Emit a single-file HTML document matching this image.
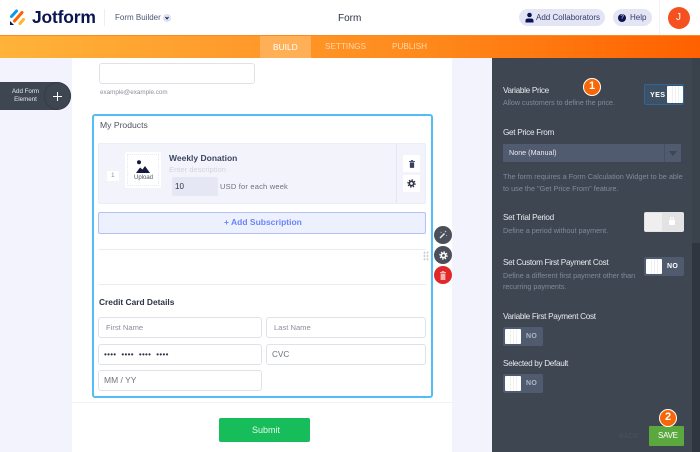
<!DOCTYPE html>
<html><head><meta charset="utf-8">
<style>
*{box-sizing:border-box}
html,body{margin:0;padding:0}
body{width:700px;height:452px;position:relative;overflow:hidden;background:#f3f3fe;font-family:"Liberation Sans",sans-serif;color:#2c3345;filter:blur(.25px)}
.a{position:absolute}
.t{position:absolute;white-space:nowrap;line-height:1}
.inp{position:absolute;background:#fff;border:1px solid #e0e2ea;border-radius:3px;height:21px;font-size:7.6px;line-height:19px;color:#8d8f9c}
.lab{color:#e8eaee;font-size:8.2px;letter-spacing:-.32px}
.sub{color:#7f8b9c;font-size:7.2px}
.tg{position:absolute;width:40px;height:19px;border-radius:2px;background:#505b70}
.tg i{position:absolute;left:2px;top:2px;width:16px;height:15px;background:#fff;border-radius:1px;background-image:linear-gradient(90deg,transparent 5px,#f0f0f0 5px,#f0f0f0 6px,transparent 6px,transparent 8px,#f0f0f0 8px,#f0f0f0 9px,transparent 9px,transparent 11px,#f0f0f0 11px,#f0f0f0 12px,transparent 12px)}
.tg b{position:absolute;left:23px;top:6px;font-size:7px;line-height:1;color:#aeb6c3;letter-spacing:.3px}
.c{position:absolute;border-radius:50%}
.n{position:absolute;width:18px;height:18px;border-radius:50%;background:#f76707;border:1.5px solid #fff;color:#fff;font-size:11px;font-weight:bold;line-height:15px;text-align:center}
</style></head><body>

<div class="a" style="left:0;top:0;width:700px;height:35px;background:#fff"></div>
<svg class="a" style="left:9px;top:9px" width="16" height="17" viewBox="0 0 16 17">
<path d="M2.5 7.5L7.5 2" stroke="#0a99f2" stroke-width="3" stroke-linecap="round"/>
<path d="M5.5 12L13 3.5" stroke="#ff6100" stroke-width="3" stroke-linecap="round"/>
<path d="M11 14.5L14.5 10.5" stroke="#ffb629" stroke-width="3" stroke-linecap="round"/>
<path d="M1 12L1 16L5 16Z" fill="#0a1551"/>
</svg>
<div class="t" style="left:32px;top:9px;font-size:17.5px;font-weight:bold;color:#0a1551;letter-spacing:-.2px">Jotform</div>
<div class="a" style="left:104px;top:9px;width:1px;height:17px;background:#eceef3"></div>
<div class="t" style="left:115px;top:14px;font-size:8px;color:#4d5673">Form Builder</div>
<div class="c" style="left:163px;top:14px;width:8px;height:8px;background:#dfe1f3"></div>
<svg class="a" style="left:165px;top:16px" width="4" height="4" viewBox="0 0 4 4"><path d="M.5 1L2 2.8L3.5 1" fill="none" stroke="#0a1551" stroke-width="1"/></svg>
<div class="t" style="left:338px;top:14px;font-size:10px;color:#2c3345">Form</div>

<div class="a" style="left:519px;top:9px;width:86px;height:17px;border-radius:9px;background:#e3e5f5"></div>
<svg class="a" style="left:524px;top:12px" width="11" height="11" viewBox="0 0 11 11"><circle cx="5.5" cy="3" r="2.3" fill="#0a1551"/><path d="M1.5 10.5V8.5Q1.5 6.5 4 6.5H7Q9.5 6.5 9.5 8.5V10.5Z" fill="#0a1551"/></svg>
<div class="t" style="left:536px;top:14px;font-size:8px;color:#343c6a">Add Collaborators</div>
<div class="a" style="left:613px;top:9px;width:39px;height:17px;border-radius:9px;background:#e3e5f5"></div>
<div class="c" style="left:618px;top:13.5px;width:8px;height:8px;background:#0a1551"></div>
<div class="t" style="left:620.5px;top:15px;font-size:6px;color:#fff">?</div>
<div class="t" style="left:630px;top:14px;font-size:8px;color:#343c6a">Help</div>
<div class="a" style="left:659px;top:0;width:1px;height:35px;background:#f3f3f6"></div>
<div class="c" style="left:668px;top:7px;width:22px;height:22px;background:#f4511e"></div>
<div class="t" style="left:676px;top:13px;font-size:10px;color:#fff">J</div>

<div class="a" style="left:0;top:35px;width:700px;height:23px;background:linear-gradient(90deg,#ffb338 0%,#ff9a2b 35%,#ff8a1c 60%,#ff6100 100%);border-top:1px solid #ff8a1c"></div>
<div class="a" style="left:260px;top:36px;width:51px;height:22px;background:#ffb057"></div>
<div class="t" style="left:273px;top:43px;font-size:8.4px;color:#fff">BUILD</div>
<div class="t" style="left:325px;top:43px;font-size:8.2px;color:#ffd9ae">SETTINGS</div>
<div class="t" style="left:392px;top:43px;font-size:8.2px;color:#ffd9ae">PUBLISH</div>

<div class="a" style="left:72px;top:58px;width:380px;height:394px;background:#fff"></div>

<div class="a" style="left:0;top:82px;width:71px;height:28px;border-radius:0 14px 14px 0;background:#3e4651"></div>
<div class="c" style="left:44px;top:82px;width:27px;height:28px;border:1px solid #353c46"></div>
<div class="t" style="left:7px;top:88px;width:37px;text-align:center;font-size:6.2px;line-height:8px;color:#e6e8ee;white-space:normal">Add Form Element</div>
<div class="a" style="left:53px;top:95.5px;width:9px;height:1px;background:#fff"></div>
<div class="a" style="left:57px;top:92px;width:1px;height:9px;background:#fff"></div>

<div class="inp" style="left:99px;top:63px;width:156px;height:21px"></div>
<div class="t" style="left:100px;top:90px;font-size:6.3px;color:#8d8f9c">example@example.com</div>

<div class="a" style="left:92px;top:114px;width:341px;height:284px;border:2px solid #55bdf6;border-radius:3px;background:#fff"></div>
<div class="t" style="left:100px;top:121px;font-size:8.6px;color:#4f5263">My Products</div>

<div class="a" style="left:98px;top:143px;width:328px;height:61px;background:#f3f4fb;border:1px solid #eceef7;border-radius:2px"></div>
<div class="a" style="left:396px;top:144px;width:1px;height:59px;background:#e3e5f0"></div>
<div class="a" style="left:107px;top:171px;width:12px;height:10px;background:#fff;border-radius:1px"></div>
<div class="t" style="left:111px;top:173px;font-size:6.5px;color:#8a93ad">1</div>
<div class="a" style="left:125px;top:152px;width:36px;height:36px;background:#fff;border-radius:2px"></div>
<div class="a" style="left:127px;top:154px;width:32px;height:32px;border:1px dotted #e8e9ee"></div>
<svg class="a" style="left:135px;top:159px" width="16" height="14" viewBox="0 0 16 14"><circle cx="4" cy="3.2" r="2" fill="#141a3c"/><path d="M1 14L5 8.5L7.5 10.5L10 7L15 14Z" fill="#141a3c"/></svg>
<div class="t" style="left:134px;top:175px;font-size:6px;color:#4f5263">Upload</div>
<div class="t" style="left:169px;top:154px;font-size:8.5px;font-weight:bold;color:#3e4560">Weekly Donation</div>
<div class="t" style="left:169px;top:166px;font-size:7.6px;color:#d2d4de">Enter description</div>
<div class="a" style="left:172px;top:177px;width:46px;height:19px;background:#e5e7f4;border-radius:2px"></div>
<div class="t" style="left:175px;top:183px;font-size:8px;color:#2c3345">10</div>
<div class="t" style="left:220px;top:183px;font-size:7.5px;color:#6c7080;letter-spacing:.2px">USD for each week</div>
<div class="a" style="left:403px;top:155px;width:17px;height:17px;background:#fff;border-radius:1px"></div>
<svg class="a" style="left:408.5px;top:159.5px" width="6" height="8" viewBox="0 0 7 9"><path d="M2.2 0H4.8V1H7V2H0V1H2.2ZM1 2.6H6V8.5Q6 9 5.5 9H1.5Q1 9 1 8.5Z" fill="#3a4060"/></svg>
<div class="a" style="left:403px;top:175px;width:17px;height:17px;background:#fff;border-radius:1px"></div>
<svg class="a" style="left:407px;top:179px" width="9" height="9" viewBox="0 0 9 9"><circle cx="4.5" cy="4.5" r="2.2" fill="none" stroke="#2c3345" stroke-width="1.7"/><circle cx="4.5" cy="4.5" r="3.6" fill="none" stroke="#2c3345" stroke-width="1.2" stroke-dasharray="1.4 1.43"/></svg>

<div class="a" style="left:98px;top:212px;width:328px;height:22px;background:#edf0fd;border:1.5px solid #b4c1f6;border-radius:2px"></div>
<div class="t" style="left:224px;top:218px;font-size:8.5px;font-weight:bold;color:#6c85f5">+ Add Subscription</div>

<div class="a" style="left:98px;top:249px;width:328px;height:1px;background:#ebecf1"></div>
<div class="a" style="left:98px;top:284px;width:328px;height:1px;background:#ebecf1"></div>
<div class="a" style="left:423px;top:251px;width:6px;height:10px;background-image:radial-gradient(#d0d1dc .9px,transparent 1px);background-size:3px 3.3px"></div>

<div class="c" style="left:434px;top:226px;width:18px;height:18px;background:#4a4f5a"></div>
<svg class="a" style="left:438px;top:230px" width="10" height="10" viewBox="0 0 10 10"><path d="M2 8L6.5 3.5" stroke="#e6e8ee" stroke-width="1.5"/><path d="M7.5 .8V2.4M6.7 1.6H8.3M3 1.8V2.8M2.5 2.3H3.5M8.6 5V6M8.1 5.5H9.1" stroke="#cfd2d8" stroke-width=".6"/></svg>
<div class="c" style="left:434px;top:246px;width:18px;height:18px;background:#4a4f5a"></div>
<svg class="a" style="left:438.5px;top:250.5px" width="9" height="9" viewBox="0 0 9 9"><circle cx="4.5" cy="4.5" r="2.2" fill="none" stroke="#fff" stroke-width="1.7"/><circle cx="4.5" cy="4.5" r="3.6" fill="none" stroke="#fff" stroke-width="1.2" stroke-dasharray="1.4 1.43"/></svg>
<div class="c" style="left:434px;top:266px;width:18px;height:18px;background:#e0282a"></div>
<svg class="a" style="left:440px;top:270.5px" width="6" height="9" viewBox="0 0 6 9"><path d="M1.8 0H4.2V1H6V2H0V1H1.8ZM.6 2.5H5.4V9H.6Z" fill="#f6b0b0"/></svg>

<div class="t" style="left:99px;top:298px;font-size:8.4px;font-weight:bold;color:#2c3345">Credit Card Details</div>
<div class="inp" style="left:98px;top:317px;width:164px;padding-left:7px">First Name</div>
<div class="inp" style="left:266px;top:317px;width:160px;padding-left:7px">Last Name</div>
<div class="inp" style="left:98px;top:344px;width:164px;padding-left:5px;color:#2c3345;font-size:8px;letter-spacing:.3px;word-spacing:2.5px">&#8226;&#8226;&#8226;&#8226; &#8226;&#8226;&#8226;&#8226; &#8226;&#8226;&#8226;&#8226; &#8226;&#8226;&#8226;&#8226;</div>
<div class="inp" style="left:266px;top:344px;width:160px;padding-left:5px;font-size:8.2px;color:#6f7280">CVC</div>
<div class="inp" style="left:98px;top:370px;width:164px;padding-left:5px;font-size:8.5px;color:#6f7280">MM / YY</div>

<div class="a" style="left:72px;top:402px;width:380px;height:1px;background:#f1f2f6"></div>
<div class="a" style="left:219px;top:418px;width:91px;height:24px;background:#18bd5b;border-radius:2px"></div>
<div class="t" style="left:252px;top:426px;font-size:9px;color:#e6f8ee">Submit</div>

<div class="a" style="left:492px;top:58px;width:208px;height:394px;background:#3e4651"></div>
<div class="a" style="left:692px;top:58px;width:8px;height:394px;background:#3a424c"></div>
<div class="a" style="left:692px;top:243px;width:8px;height:209px;background:#30363f"></div>

<div class="n" style="left:583px;top:78px">1</div>
<div class="t lab" style="left:503px;top:87px">Variable Price</div>
<div class="t sub" style="left:503px;top:100px;font-size:7.1px">Allow customers to define the price.</div>
<div class="tg" style="left:644px;top:84px;height:21px;background:#3d5064;border:1px solid #2a679c"><i style="left:22px;top:1px;width:16px;height:17px"></i><b style="left:5px;top:6px;color:#fff;font-weight:bold;font-size:7.2px">YES</b></div>

<div class="t lab" style="left:503px;top:129px">Get Price From</div>
<div class="a" style="left:503px;top:144px;width:178px;height:18px;background:#505b70;border-radius:1px"></div>
<div class="a" style="left:664px;top:144px;width:1px;height:18px;background:#465063"></div>
<div class="a" style="left:669px;top:151px;border-left:4px solid transparent;border-right:4px solid transparent;border-top:5px solid #3e4651"></div>
<div class="t" style="left:509px;top:149px;font-size:7.2px;color:#e8eaee">None (Manual)</div>
<div class="t sub" style="left:503px;top:171px;line-height:12px;white-space:normal;width:181px;font-size:7.3px">The form requires a Form Calculation Widget to be able to use the "Get Price From" feature.</div>

<div class="t lab" style="left:503px;top:214px">Set Trial Period</div>
<div class="t sub" style="left:503px;top:227px">Define a period without payment.</div>
<div class="a" style="left:644px;top:212px;width:40px;height:20px;background:#e3e3e3;border-radius:2px"></div>
<div class="a" style="left:645px;top:213px;width:17px;height:18px;background:#efefef"></div>
<div class="a" style="left:669px;top:220px;width:6px;height:5px;background:#fff;border-radius:1px"></div>
<div class="a" style="left:670px;top:217px;width:4px;height:4px;border:1px solid #fff;border-radius:2px 2px 0 0"></div>

<div class="t lab" style="left:503px;top:259px">Set Custom First Payment Cost</div>
<div class="t sub" style="left:503px;top:272px">Define a different first payment other than</div>
<div class="t sub" style="left:503px;top:283px">recurring payments.</div>
<div class="tg" style="left:644px;top:257px"><i></i><b style="color:#fff;font-weight:bold">NO</b></div>

<div class="t lab" style="left:503px;top:313px">Variable First Payment Cost</div>
<div class="tg" style="left:503px;top:327px"><i></i><b style="font-weight:bold">NO</b></div>
<div class="t lab" style="left:503px;top:360px">Selected by Default</div>
<div class="tg" style="left:503px;top:374px"><i></i><b style="font-weight:bold">NO</b></div>

<div class="t" style="left:619px;top:432px;font-size:7.2px;color:#4a525e">BACK</div>
<div class="a" style="left:649px;top:426px;width:35px;height:20px;background:#5aa83e;border-radius:1px"></div>
<div class="t" style="left:658px;top:432px;font-size:8px;letter-spacing:-.25px;color:#fff">SAVE</div>
<div class="n" style="left:659px;top:409px">2</div>
</body></html>
